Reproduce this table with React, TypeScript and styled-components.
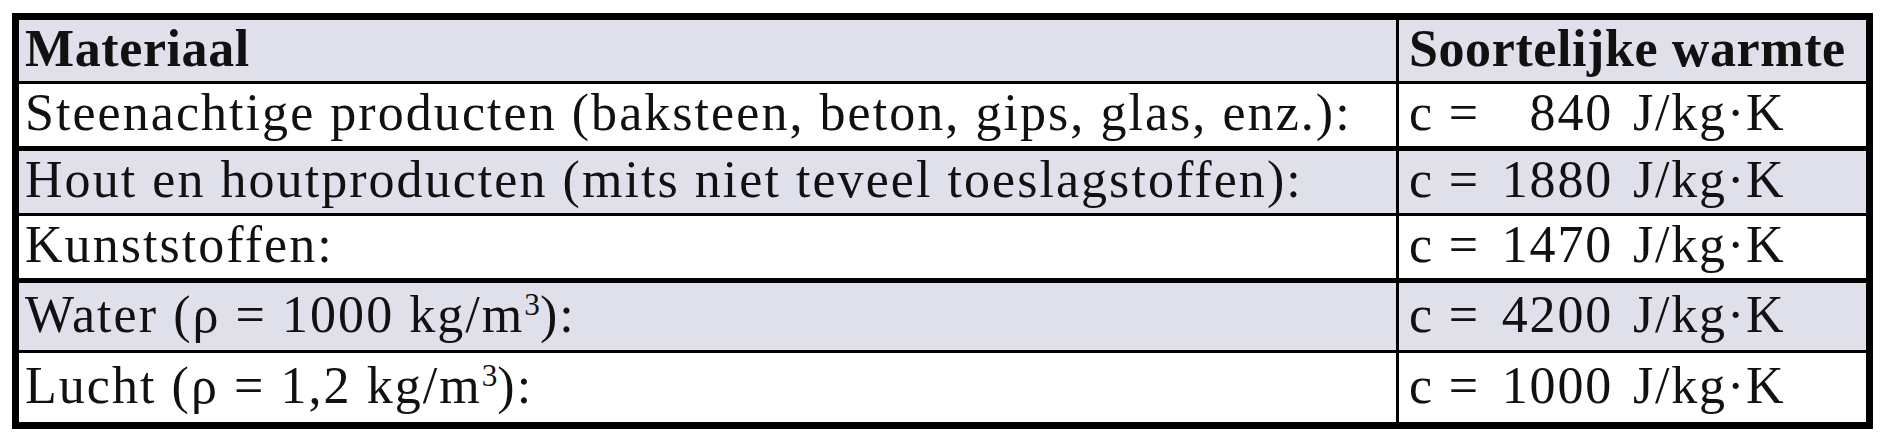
import React from 'react';
import styled, { createGlobalStyle } from 'styled-components';

const GlobalStyle = createGlobalStyle`
  html, body {
    margin: 0;
    padding: 0;
    background: #ffffff;
  }
  body {
    padding: 13px 12px;
    font-family: "Liberation Serif", "Times New Roman", serif;
    color: #111;
  }
`;

const Table = styled.table`
  width: 1861px;
  border-collapse: collapse;
  border: 7px solid #000;
  table-layout: fixed;
`;

const Row = styled.tr<{ $shaded?: boolean; $height: number; $rule: number }>`
  height: ${({ $height }) => $height}px;
  background: ${({ $shaded }) => ($shaded ? '#dfe0ea' : '#ffffff')};
  border-bottom: ${({ $rule }) => $rule}px solid #000;
`;

const Cell = styled.td<{ $right?: boolean }>`
  padding: 0 ${({ $right }) => ($right ? '10px' : '6px')} 4px;
  font-size: 52px;
  letter-spacing: 2.05px;
  line-height: 1;
  white-space: nowrap;
  vertical-align: middle;
  border-left: ${({ $right }) => ($right ? '3px solid #000' : 'none')};
  width: ${({ $right }) => ($right ? '447px' : 'auto')};
`;

const HeadCell = styled(Cell).attrs({ as: 'th' })`
  font-weight: 700;
  text-align: left;
  letter-spacing: 0.6px;
`;

const Heat = styled.span`
  display: inline-flex;
  align-items: baseline;
  letter-spacing: 1.8px;
`;

const Symbol = styled.span`
  width: 60px;
`;

const Value = styled.span`
  width: 144px;
  text-align: right;
`;

const Unit = styled.span`
  margin-left: 20px;
`;

const Sup = styled.sup`
  font-size: 60%;
  line-height: 0;
  vertical-align: 0.55em;
  letter-spacing: 0;
`;

const rows = [
  { label: <>Steenachtige producten (baksteen, beton, gips, glas, enz.):</>, value: '840', height: 66 },
  { label: <>Hout en houtproducten (mits niet teveel toeslagstoffen):</>, value: '1880', height: 66 },
  { label: <>Kunststoffen:</>, value: '1470', height: 66 },
  { label: <>Water (ρ = 1000 kg/m<Sup>3</Sup>):</>, value: '4200', height: 71 },
  { label: <>Lucht (ρ = 1,2 kg/m<Sup>3</Sup>):</>, value: '1000', height: 74 },
];

export default function App() {
  return (
    <>
      <GlobalStyle />
      <Table>
        <tbody>
          <Row $shaded $height={66} $rule={3}>
            <HeadCell>Materiaal</HeadCell>
            <HeadCell $right>Soortelijke warmte</HeadCell>
          </Row>
          {rows.map((r, i) => (
            <Row key={i} $shaded={i % 2 === 1} $height={r.height} $rule={i % 2 === 0 ? 5 : 3}>
              <Cell>{r.label}</Cell>
              <Cell $right>
                <Heat>
                  <Symbol>c =</Symbol>
                  <Value>{r.value}</Value>
                  <Unit>J/kg·K</Unit>
                </Heat>
              </Cell>
            </Row>
          ))}
        </tbody>
      </Table>
    </>
  );
}
